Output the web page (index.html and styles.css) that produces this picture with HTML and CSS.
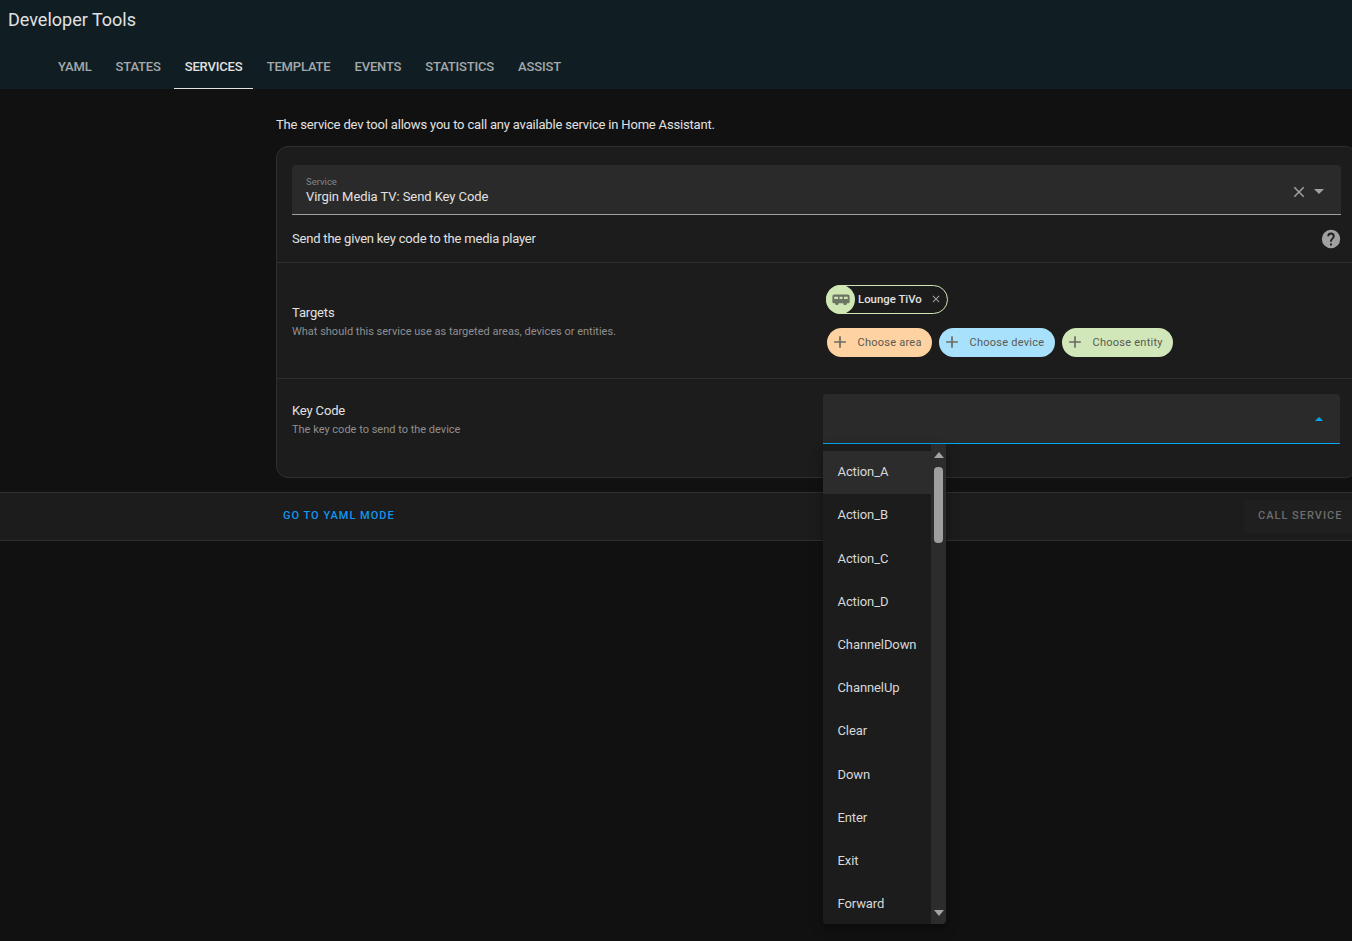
FILE: index.html
```html
<!DOCTYPE html>
<html lang="en">
<head>
<meta charset="utf-8">
<title>Developer Tools</title>
<link rel="stylesheet" href="styles.css">
</head>
<body>
<header class="header">
  <div class="title">Developer Tools</div>
  <nav class="tabs">
    <a class="tab">YAML</a>
    <a class="tab">STATES</a>
    <a class="tab active">SERVICES</a>
    <a class="tab">TEMPLATE</a>
    <a class="tab">EVENTS</a>
    <a class="tab">STATISTICS</a>
    <a class="tab">ASSIST</a>
  </nav>
</header>
<main class="main">
  <p class="intro">The service dev tool allows you to call any available service in Home Assistant.</p>
  <section class="card">
    <div class="service-wrap">
      <div class="field service-field">
        <div class="field-text">
          <div class="field-label">Service</div>
          <div class="field-value">Virgin Media TV: Send Key Code</div>
        </div>
        <svg class="icon-clear" viewBox="0 0 24 24"><path d="M19 6.41 17.59 5 12 10.59 6.41 5 5 6.41 10.59 12 5 17.59 6.41 19 12 13.41 17.59 19 19 17.59 13.41 12z"/></svg>
        <span class="caret"></span>
      </div>
    </div>
    <div class="desc-row">
      <span>Send the given key code to the media player</span>
      <svg class="icon-help" viewBox="0 0 24 24"><path d="M15.07 11.25l-.9.92C13.45 12.89 13 13.5 13 15h-2v-.5c0-1.11.45-2.11 1.17-2.83l1.24-1.26c.37-.36.59-.86.59-1.41a2 2 0 0 0-2-2 2 2 0 0 0-2 2H8a4 4 0 0 1 4-4 4 4 0 0 1 4 4c0 .88-.36 1.67-.93 2.25M13 19h-2v-2h2M12 2A10 10 0 0 0 2 12a10 10 0 0 0 10 10 10 10 0 0 0 10-10c0-5.53-4.5-10-10-10z"/></svg>
    </div>
    <div class="row targets-row">
      <div class="row-info">
        <div class="row-name">Targets</div>
        <div class="row-desc">What should this service use as targeted areas, devices or entities.</div>
      </div>
      <div class="row-control">
        <div class="entity-chip">
          <span class="avatar">
            <svg viewBox="0 0 24 24"><path fill-rule="evenodd" d="M3 6h18a2.5 2.5 0 0 1 2.5 2.500v7a2 2 0 0 1-2 2H20a2.500 2.500 0 0 1-5 0H9a2.500 2.500 0 0 1-5 0H2.500a2 2 0 0 1-2-2v-7A2.500 2.500 0 0 1 3 6zM3 9v3h5V9zm7 0v3h4V9zm6 0v3h5V9z"/></svg>
          </span>
          <span class="entity-name">Lounge TiVo</span>
          <svg class="chip-x" viewBox="0 0 24 24"><path d="M19 6.41 17.59 5 12 10.59 6.41 5 5 6.41 10.59 12 5 17.59 6.41 19 12 13.41 17.59 19 19 17.59 13.41 12z"/></svg>
        </div>
        <div class="choose-row">
          <div class="choose area"><svg viewBox="0 0 24 24"><path d="M19 13h-6v6h-2v-6H5v-2h6V5h2v6h6z"/></svg><span>Choose area</span></div>
          <div class="choose device"><svg viewBox="0 0 24 24"><path d="M19 13h-6v6h-2v-6H5v-2h6V5h2v6h6z"/></svg><span>Choose device</span></div>
          <div class="choose entity"><svg viewBox="0 0 24 24"><path d="M19 13h-6v6h-2v-6H5v-2h6V5h2v6h6z"/></svg><span>Choose entity</span></div>
        </div>
      </div>
    </div>
    <div class="row key-row">
      <div class="row-info">
        <div class="row-name">Key Code</div>
        <div class="row-desc">The key code to send to the device</div>
      </div>
      <div class="row-control">
        <div class="field select-field">
          <span class="caret up"></span>
          <div class="menu">
            <ul class="menu-list">
              <li class="selected">Action_A</li>
              <li>Action_B</li>
              <li>Action_C</li>
              <li>Action_D</li>
              <li>ChannelDown</li>
              <li>ChannelUp</li>
              <li>Clear</li>
              <li>Down</li>
              <li>Enter</li>
              <li>Exit</li>
              <li>Forward</li>
            </ul>
            <div class="scrollbar">
              <span class="sb-up"></span>
              <span class="sb-thumb"></span>
              <span class="sb-down"></span>
            </div>
          </div>
        </div>
      </div>
    </div>
  </section>
  <div class="bottom-bar">
    <a class="yaml-link">GO TO YAML MODE</a>
    <a class="call-btn">CALL SERVICE</a>
  </div>
</main>
</body>
</html>
```
FILE: styles.css
```css
* { box-sizing: border-box; }
html, body { margin: 0; height: 100%; }
body {
  background: #111111;
  color: #e1e1e1;
  font-family: Roboto, "Liberation Sans", sans-serif;
  overflow: hidden;
}
.header {
  height: 89px;
  background: #101e24;
  display: flex;
  flex-direction: column;
}
.title {
  font-size: 18px;
  line-height: 24px;
  padding: 8px 8px 0;
  color: #e1e1e1;
  height: 42px;
}
.tabs { display: flex; padding-left: 46px; height: 47px; }
.tab {
  padding: 0 12px;
  font-size: 13px;
  font-weight: 500;
  line-height: 49px;
  color: #a4a9ab;
  letter-spacing: -0.17px;
  height: 47px;
}
.tab.active {
  color: #e1e1e1;
  border-bottom: 1px solid #e1e1e1;
  padding: 0 11px;
  margin: 0 2px 0 1px;
  width: 79px;
  text-align: center;
}
.main { padding-top: 1px; }
.intro {
  margin: 0;
  padding: 26px 0 0 276px;
  height: 56px;
  font-size: 13px;
  line-height: 18px;
  letter-spacing: -0.18px;
  color: #e1e1e1;
}
.card {
  margin-left: 276px;
  width: 1081px;
  height: 332px;
  background: #1c1c1c;
  border: 1px solid #2f2f2f;
  border-radius: 12px;
}
.service-wrap { padding: 18px 15px 0; }
.field {
  background: #2a2a2a;
  border-radius: 4px 4px 0 0;
  border-bottom: 1px solid #a0a0a0;
  height: 50px;
  display: flex;
  align-items: center;
  position: relative;
}
.service-field { padding: 4px 17px 0 14px; }
.field-text { flex: 1; padding-bottom: 4px; }
.field-label { font-size: 9.5px; line-height: 13px; color: #858585; }
.field-value { font-size: 13px; line-height: 17px; letter-spacing: -0.07px; color: #e1e1e1; }
.icon-clear { width: 18px; height: 18px; fill: #a0a0a0; margin-right: 6px; }
.caret {
  width: 0;
  height: 0;
  border-left: 5px solid transparent;
  border-right: 5px solid transparent;
  border-top: 5px solid #a0a0a0;
}
.caret.up {
  position: absolute;
  right: 17px;
  top: 23px;
  border-top: 0;
  border-left-width: 4px;
  border-right-width: 4px;
  border-bottom: 4px solid #03a9f4;
}
.desc-row {
  height: 47px;
  padding: 0 14px 0 15px;
  display: flex;
  align-items: center;
  justify-content: space-between;
  font-size: 13px;
  letter-spacing: -0.2px;
  color: #e1e1e1;
}
.icon-help { width: 22px; height: 22px; fill: #a0a0a0; }
.row {
  border-top: 1px solid #2f2f2f;
  display: flex;
  padding: 0 16px 0 15px;
}
.targets-row { height: 116px; align-items: center; }
.targets-row .row-info { padding-top: 2px; }
.key-row { height: 99px; padding-top: 15px; }
.row-info { width: 531px; }
.row-name { font-size: 13px; line-height: 17px; margin-bottom: 3px; letter-spacing: -0.15px; color: #e1e1e1; }
.row-desc { font-size: 11px; line-height: 16px; color: #8f8f8f; }
.key-row .row-info { padding-top: 8px; }
.row-control { flex: 1; min-width: 0; }
.entity-chip {
  width: 122px;
  height: 29px;
  margin-left: 3px;
  border: 1px solid #cfe5b6;
  border-radius: 15px;
  display: flex;
  align-items: center;
  position: relative;
}
.avatar {
  width: 29px;
  height: 29px;
  margin: -1px 3px -1px -1px;
  flex: none;
  background: #d0e6b5;
  border-radius: 50%;
  display: flex;
  align-items: center;
  justify-content: center;
}
.avatar svg { width: 18px; height: 18px; fill: #6a7562; }
.entity-name { font-size: 11.4px; font-weight: 500; color: #e1e1e1; flex: 1; }
.chip-x { width: 12px; height: 12px; fill: #a0a0a0; margin-right: 5px; }
.choose-row { display: flex; gap: 7px; margin: 14px 0 0 4px; }
.choose {
  height: 29px;
  border-radius: 15px;
  display: flex;
  align-items: center;
  font-size: 11px;
  letter-spacing: 0.25px;
  color: #5a5a52;
  padding-left: 3px;
}
.choose svg { width: 20px; height: 20px; fill: #6b6b62; margin-right: 7.5px; }
.choose.area { background: #ffd2a1; width: 105px; }
.choose.device { background: #a8e1fb; width: 116px; }
.choose.entity { background: #d2e7b9; width: 111px; }
.select-field { border-bottom-color: #03a9f4; }
.menu {
  position: absolute;
  left: 0;
  top: 50px;
  width: 123px;
  height: 480px;
  display: flex;
  overflow: hidden;
  border-radius: 0 0 4px 4px;
  z-index: 5;
  box-shadow: 0 5px 12px rgba(0, 0, 0, 0.35);
}
.menu-list {
  list-style: none;
  margin: 0;
  padding: 7.3px 0 0;
  width: 108px;
  background: linear-gradient(#1c1c1c, #1c1c1c) 0 7px no-repeat;
  overflow: hidden;
}
.menu-list li {
  height: 43.2px;
  line-height: 42px;
  padding-left: 14.500px;
  font-size: 13px;
  letter-spacing: -0.1px;
  color: #d8d8d8;
}
.menu-list li.selected { background: #2c2c2c; }
.scrollbar {
  position: relative;
  width: 15px;
  background: #2c2c2c;
  flex: none;
}
.sb-up, .sb-down {
  position: absolute;
  left: 3px;
  width: 0;
  height: 0;
  border-left: 5px solid transparent;
  border-right: 5px solid transparent;
}
.sb-up { top: 8px; border-bottom: 6px solid #a3a3a3; }
.sb-down { bottom: 8px; border-top: 6px solid #a3a3a3; }
.sb-thumb {
  position: absolute;
  left: 3px;
  top: 23px;
  width: 9px;
  height: 76px;
  border-radius: 4px;
  background: #9e9e9e;
}
.bottom-bar {
  height: 49px;
  margin-top: 14px;
  background: #1c1c1c;
  border-top: 1px solid #2f2f2f;
  border-bottom: 1px solid #2f2f2f;
  display: flex;
  align-items: center;
  justify-content: space-between;
  padding-left: 283px;
  font-size: 11px;
  font-weight: 500;
  letter-spacing: 1px;
}
.yaml-link { color: #0f97f0; margin-bottom: 3px; }
.call-btn {
  height: 33px;
  line-height: 32px;
  background: #1f1f1f;
  color: #6d6d6d;
  padding: 0 10px 0 14px;
  width: 108px;
  border-radius: 4px 0 0 4px;
  white-space: nowrap;
}
```
